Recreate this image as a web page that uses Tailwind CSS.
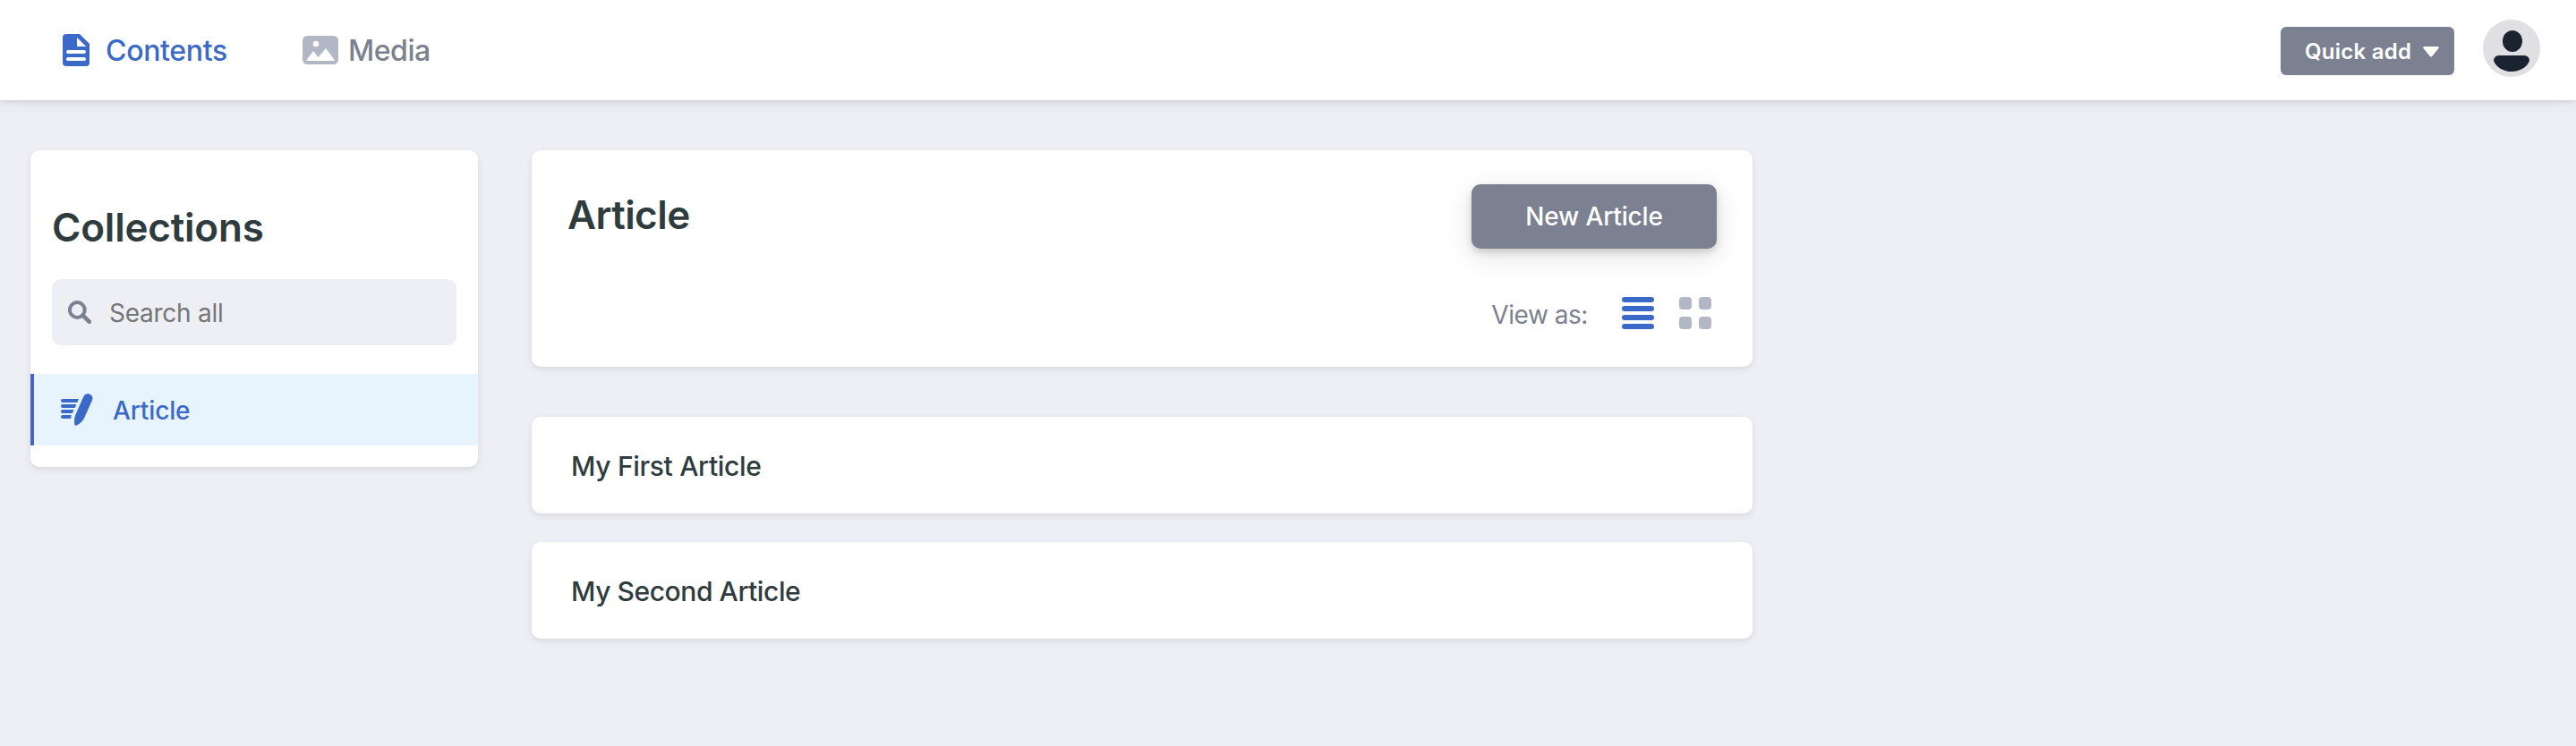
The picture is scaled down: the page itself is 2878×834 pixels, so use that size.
<!DOCTYPE html>
<html lang="en">
<head>
<meta charset="utf-8">
<title>Contents</title>
<script src="https://cdn.jsdelivr.net/npm/@tailwindcss/browser@4"></script>
</head>
<body class="min-h-screen bg-[#eeeff4] font-['Inter',sans-serif] text-[#2f3c3e]">
<header class="flex h-28 items-start bg-white shadow-[0_2px_6px_rgba(0,0,0,0.1),0_8px_20px_rgba(0,0,0,0.035)]">
  <nav class="flex h-28 items-center pl-[70px] font-medium text-[32px] leading-10">
    <a class="flex items-center gap-[18px] text-[#3b69c8]">
      <svg class="h-9 w-[30px]" viewBox="0 0 30 36"><path fill="currentColor" d="M4 0H19L30 11V32a4 4 0 0 1-4 4H4a4 4 0 0 1-4-4V4a4 4 0 0 1 4-4z"/><path fill="#fff" d="M16 4V14H26.300z"/><path stroke="#fff" stroke-width="4" stroke-linecap="round" d="M6 20H24M6 28H24"/></svg>
      <span class="w-[138px] pt-[2px] tracking-[-0.33px]">Contents</span>
    </a>
    <a class="ml-[82px] flex items-center gap-[11px] text-[#7b8190]">
      <svg class="h-8 w-10 text-[#b1b7c5]" viewBox="0 0 40 32"><rect width="40" height="32" rx="5.500" fill="currentColor"/><circle cx="15" cy="9" r="3.300" fill="#fff"/><path fill="#fff" d="M4 28L12 17L17.500 24L26 14L36.500 28z"/></svg>
      <span class="pt-[2px] tracking-[-0.45px]">Media</span>
    </a>
  </nav>
  <div class="ml-auto flex gap-8 pr-10">
    <button class="mt-[30px] flex h-[54px] w-[194px] items-center rounded-md bg-[#7b8190] pl-[27px] text-2xl font-semibold tracking-[0.25px] text-white">
      <span class="w-[132px] pt-px text-left">Quick add</span>
      <svg class="mt-[2px] h-3 w-[18px]" viewBox="0 0 18 12"><path fill="currentColor" d="M1.200 0H16.800Q18.400.4 17.500 2L10.300 10.700Q9 12.300 7.700 10.700L.5 2Q-.4.4 1.200 0z"/></svg>
    </button>
    <svg class="mt-[22px] size-16" viewBox="0 0 64 64"><circle cx="32" cy="32" r="32" fill="#dfdfe4"/><ellipse cx="33" cy="24" rx="11" ry="12" fill="#1b2330"/><path fill="#1b2330" d="M18 40H46Q52 40.300 52 46C49 54 40 58 32 58S15 54 12 46Q12 40.300 18 40z"/></svg>
  </div>
</header>
<div class="flex items-start gap-[60px] pl-[34px] pt-14">
  <aside class="h-[354px] w-[500px] rounded-[10px] bg-white shadow-[0_2px_6px_rgba(0,0,0,0.06),0_4px_12px_rgba(0,0,0,0.04)]">
    <h2 class="px-6 pt-[58px] text-[44px] font-semibold leading-[56px] tracking-[-0.2px]">Collections</h2>
    <div class="mx-6 mt-[30px] flex h-[74px] items-center rounded-[10px] bg-[#eeeff4] pl-[18px] text-[28px]">
      <svg class="size-[26px] text-[#7b8190]" viewBox="0 0 26 26" fill="none" stroke="currentColor"><circle cx="10.300" cy="10.500" r="8.400" stroke-width="4"/><path d="M16.500 16.500L23.700 23.700" stroke-width="4.600" stroke-linecap="round"/></svg>
      <span class="pl-5 pt-px tracking-[-0.25px] text-[#757575]">Search all</span>
    </div>
    <a class="mt-8 flex h-20 items-center border-l-4 border-[#4763c5] bg-[#e7f4fe] pl-[30px] text-[28px] font-medium tracking-[-0.15px] text-[#3b69c8]">
      <svg class="mb-px h-9 w-9" viewBox="0 0 36 36" fill="currentColor"><path d="M2 6H20L18.300 10H2a2 2 0 0 1 0-4zM2 12H17.300L15.700 16H2a2 2 0 0 1 0-4zM2 18H14.500L13 22H2a2 2 0 0 1 0-4zM2 24H11.800L11 28H2a2 2 0 0 1 0-4z"/><path d="M25.500 3C27 0 29.500-.2 32 .6C35 2 36.200 4.500 35 7.500L26 27.500C24.500 31 21 34 17.200 35.700Q15.700 36.200 15.300 34.700C14.800 31.500 15 27.500 16.200 24z"/></svg>
      <span class="pl-[22px] pt-[2px]">Article</span>
    </a>
  </aside>
  <main class="w-[1364px]">
    <section class="h-[242px] rounded-[10px] bg-white px-10 pt-[38px] shadow-[0_2px_6px_rgba(0,0,0,0.06),0_4px_12px_rgba(0,0,0,0.04)]">
      <div class="flex h-[72px] items-center justify-between">
        <h1 class="-mt-[4px] text-[44px] font-semibold leading-[56px] tracking-[-0.55px]">Article</h1>
        <button class="h-[72px] w-[274px] rounded-[10px] bg-[#7b8190] text-[28px] font-medium tracking-[-0.15px] text-white shadow-[0_4px_8px_rgba(0,0,0,0.15),0_8px_30px_rgba(0,0,0,0.12)]">New Article</button>
      </div>
      <div class="mt-[54px] flex h-9 items-center justify-end pr-[6px]">
        <span class="mr-[38px] pt-[4px] text-[28px] tracking-[-0.45px] text-[#7b8190]">View as:</span>
        <svg class="mr-7 size-9 text-[#3b69c8]" viewBox="0 0 36 36" fill="currentColor"><rect width="36" height="6" rx="3"/><rect y="10" width="36" height="6" rx="3"/><rect y="20" width="36" height="6" rx="3"/><rect y="30" width="36" height="6" rx="3"/></svg>
        <svg class="size-9 text-[#b1b7c5]" viewBox="0 0 36 36" fill="currentColor"><rect width="14" height="14" rx="4"/><rect x="22" width="14" height="14" rx="4"/><rect y="22" width="14" height="14" rx="4"/><rect x="22" y="22" width="14" height="14" rx="4"/></svg>
      </div>
    </section>
    <ul class="mt-14 flex flex-col gap-8 text-[30px] font-medium">
      <li class="flex h-[108px] items-center rounded-[10px] bg-white pl-11 pt-[2px] shadow-[0_2px_6px_rgba(0,0,0,0.06),0_4px_12px_rgba(0,0,0,0.04)] tracking-[-0.32px]">My First Article</li>
      <li class="flex h-[108px] items-center rounded-[10px] bg-white pl-11 pt-[2px] shadow-[0_2px_6px_rgba(0,0,0,0.06),0_4px_12px_rgba(0,0,0,0.04)] tracking-[-0.43px]">My Second Article</li>
    </ul>
  </main>
</div>
</body>
</html>
